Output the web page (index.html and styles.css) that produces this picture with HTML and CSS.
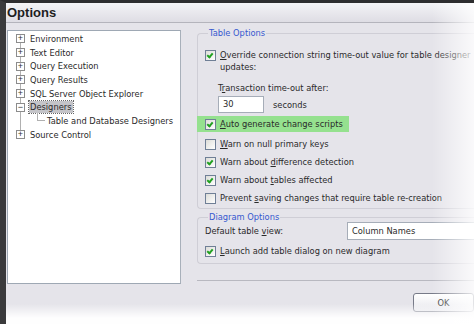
FILE: index.html
```html
<!DOCTYPE html>
<html lang="en">
<head>
  <meta charset="UTF-8">
  <title>Options</title>
  <link rel="stylesheet" href="styles.css">
</head>
<body>

  <div class="window">
    <div class="titlebar">Options</div>

    <div class="content">
      <div class="tree">
        <div class="node"><span class="exp">+</span><span class="label">Environment</span></div>
        <div class="node"><span class="exp">+</span><span class="label">Text Editor</span></div>
        <div class="node"><span class="exp">+</span><span class="label">Query Execution</span></div>
        <div class="node"><span class="exp">+</span><span class="label">Query Results</span></div>
        <div class="node"><span class="exp">+</span><span class="label">SQL Server Object Explorer</span></div>
        <div class="node"><span class="exp">&minus;</span><span class="label selected">Designers</span></div>
        <div class="node child"><span class="elbow"></span><span class="label">Table and Database Designers</span></div>
        <div class="node last"><span class="exp">+</span><span class="label">Source Control</span></div>
      </div>

      <div class="options">
        <fieldset class="group table-group">
          <legend>Table Options</legend>
          <div class="check two-line"><span class="box on"></span><span><u>O</u>verride connection string time-out value for table designer<br>updates:</span></div>
          <div class="sub-label">T<u>r</u>ansaction time-out after:</div>
          <div class="timeout"><span class="input">30</span><span>seconds</span></div>
          <div class="check highlight"><span class="box on"></span><span><u>A</u>uto generate change scripts</span></div>
          <div class="check"><span class="box"></span><span><u>W</u>arn on null primary keys</span></div>
          <div class="check"><span class="box on"></span><span>Warn about <u>d</u>ifference detection</span></div>
          <div class="check"><span class="box on"></span><span>Warn about <u>t</u>ables affected</span></div>
          <div class="check"><span class="box"></span><span>Prevent <u>s</u>aving changes that require table re-creation</span></div>
        </fieldset>

        <fieldset class="group diagram-group">
          <legend>Diagram Options</legend>
          <div class="view-row"><span class="view-label">Default table <u>v</u>iew:</span><span class="select">Column Names</span></div>
          <div class="check"><span class="box on"></span><span><u>L</u>aunch add table dialog on new diagram</span></div>
        </fieldset>

        <div class="separator"></div>
        <div class="buttons"><button>OK</button></div>
      </div>
    </div>

    <div class="fade"></div>
  </div>

</body>
</html>
```

FILE: styles.css
```css
body {
  margin: 0;
  background: white;
  font-family: "DejaVu Sans", sans-serif;
  font-size: 8.3px;
  color: #2a2a2a;
}
.window {
  position: relative;
  width: 468px;
  height: 321px;
  border-top: 3px solid #2d2d2f;
  border-left: 6px solid #3a3a3c;
  background: #e5e4ea;
  overflow: hidden;
}
.titlebar {
  height: 19px;
  line-height: 19px;
  padding-left: 1px;
  font-family: "Liberation Sans", sans-serif;
  font-weight: bold;
  font-size: 13px;
  color: #1e1e1e;
  background: linear-gradient(#f3f3f6, #dedde4);
  border-bottom: 1px solid #b4b4bc;
}
.content {
  display: flex;
  gap: 12px;
  padding: 7px 0 0 1px;
}
.tree {
  width: 174px;
  height: 254px;
  padding-top: 1px;
  box-sizing: border-box;
  background: white;
  border: 1px solid #9ea8b4;
  border-right-color: #a8b0ba;
  background-image: linear-gradient(#b0b0b0, #b0b0b0);
  background-size: 1px 96px;
  background-position: 12px 8px;
  background-repeat: no-repeat;
}
.node {
  display: flex;
  align-items: center;
  height: 13.7px;
}
.exp {
  width: 7px;
  height: 7px;
  margin-left: 8px;
  margin-right: 4px;
  border: 1px solid #8c8c8c;
  background: white;
  font-family: "Liberation Sans", sans-serif;
  font-size: 9px;
  line-height: 7px;
  text-align: center;
  color: #333;
}
.label {
  padding: 0 1px;
  height: 12px;
  line-height: 12px;
}
.selected {
  background: #c4c4c8;
  outline: 1px dotted #666;
}
.child .elbow {
  width: 7px;
  height: 7px;
  margin: -7px 1px 0 29px;
  border-left: 1px solid #b0b0b0;
  border-bottom: 1px solid #b0b0b0;
}
.options {
  flex: 1;
  padding-left: 4px;
}
.group {
  margin: 0;
  padding: 0 0 0 7px;
  border: 1px solid #cfced6;
  border-right: none;
  border-radius: 4px 0 0 4px;
}
.group legend {
  margin-left: 3px;
  padding: 0 1px;
  color: #3558cf;
  line-height: 11px;
}
.table-group {
  height: 179px;
  margin-top: -2px;
}
.check {
  display: flex;
  align-items: center;
  gap: 4px;
  height: 18px;
}
.check.two-line {
  align-items: flex-start;
  height: auto;
  margin-top: 10px;
  line-height: 12px;
}
.two-line .box {
  margin-top: 1px;
}
.box {
  flex: none;
  width: 9px;
  height: 9px;
  border: 1px solid #6f7f96;
  background: linear-gradient(135deg, #dcdcd8, #ffffff);
  position: relative;
}
.box.on::after {
  content: "";
  position: absolute;
  left: 2px;
  top: 1px;
  width: 2px;
  height: 4px;
  border: solid #21a121;
  border-width: 0 2px 2px 0;
  transform: rotate(40deg);
}
.sub-label {
  margin: 9px 0 0 13px;
  line-height: 12px;
}
.timeout {
  display: flex;
  align-items: center;
  gap: 9px;
  margin: 2px 0 0 13px;
}
.input {
  width: 40px;
  height: 15px;
  line-height: 15px;
  padding-left: 4px;
  background: white;
  border: 1px solid #a6adb8;
}
.check.highlight {
  margin: 3px 0 3px -8px;
  padding-left: 8px;
  width: 144px;
  height: 16px;
  background: #95e18f;
}
.diagram-group {
  height: 50px;
  margin-top: 3px;
}
.view-row {
  display: flex;
  align-items: center;
  height: 19px;
  margin-top: -2px;
}
.view-label {
  width: 142px;
}
.select {
  flex: 1;
  height: 16px;
  line-height: 16px;
  padding-left: 4px;
  background: white;
  border: 1px solid #a6adb8;
  border-right: none;
}
.diagram-group .check {
  margin-top: 2px;
}
.separator {
  margin-top: 16px;
  border-top: 1px solid #b8b8c0;
}
.buttons {
  display: flex;
  justify-content: flex-end;
  padding: 12px 0 0 0;
}
button {
  width: 61px;
  height: 19px;
  margin-right: 0;
  font-family: "DejaVu Sans", sans-serif;
  font-size: 8.3px;
  color: #333;
  border: 1px solid #777a88;
  border-radius: 3px;
  background: linear-gradient(#ffffff, #e6e6ec);
}
.fade {
  position: absolute;
  top: -3px;
  left: -6px;
  width: 474px;
  height: 324px;
  pointer-events: none;
  background:
    linear-gradient(to bottom, rgba(255,255,255,0) 304px, rgba(255,255,255,0.97) 318px),
    linear-gradient(to right, rgba(255,255,255,0) 432px, rgba(255,255,255,0.8) 474px);
}
```
